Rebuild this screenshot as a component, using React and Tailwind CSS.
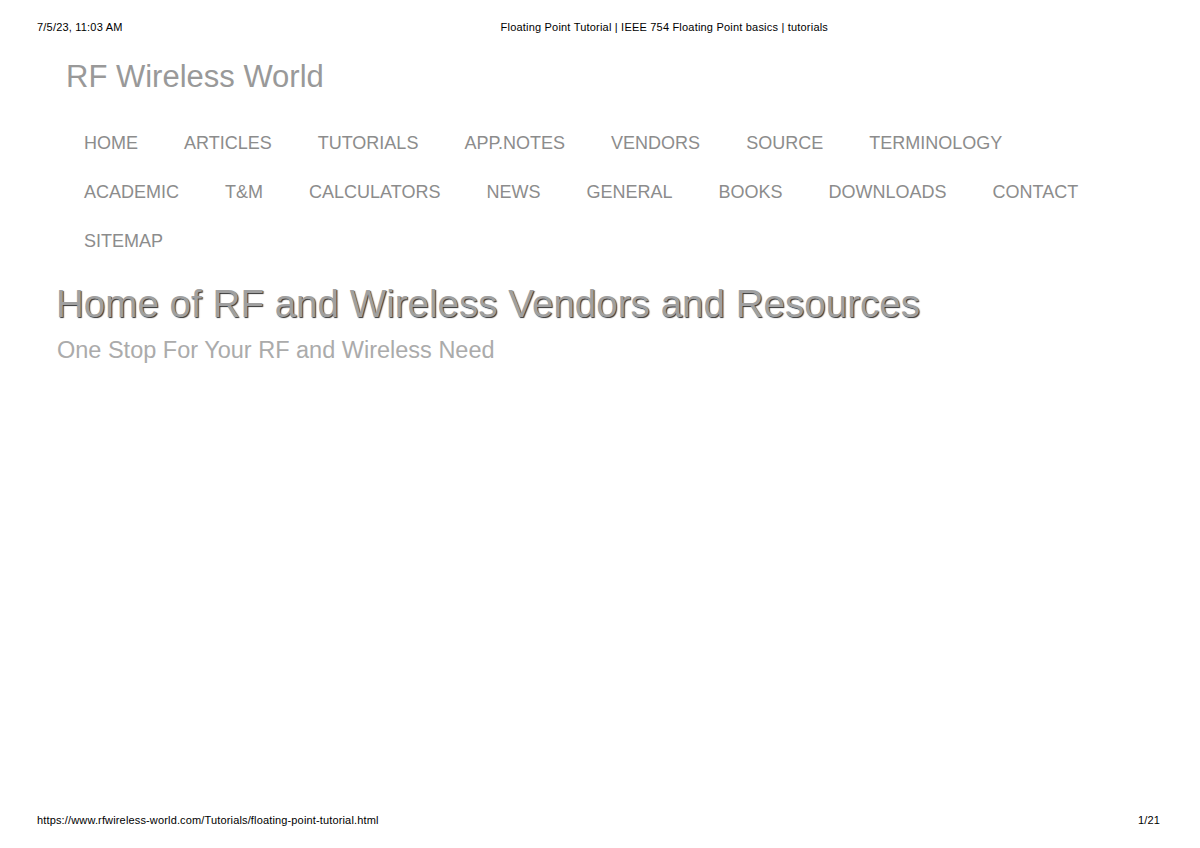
export default function App() {
  const row = [
    "HOME","ARTICLES","TUTORIALS","APP.NOTES","VENDORS","SOURCE","TERMINOLOGY",
    "ACADEMIC","T&M","CALCULATORS","NEWS","GENERAL","BOOKS","DOWNLOADS","CONTACT","SITEMAP",
  ];
  return (
    <div className="flex min-h-[848px] flex-col bg-white font-['Liberation_Sans',Arial,sans-serif]">
      <div className="flex pt-[20px] pl-[37px] text-[11px] leading-[14px] tracking-[0.2px] text-black">
        <span>7/5/23, 11:03 AM</span>
        <span className="ml-[378px]">Floating Point Tutorial | IEEE 754 Floating Point basics | tutorials</span>
      </div>
      <div className="mt-[25px] pl-[66px] text-[31px] leading-[36px] text-[#999999]">RF Wireless World</div>
      <ul className="mt-[36px] flex w-[1140px] flex-wrap gap-x-[46px] gap-y-[25px] pl-[84px] text-[18px] leading-[24px] text-[#8c8c8c]">
        {row.map((r) => (
          <li key={r}>{r}</li>
        ))}
      </ul>
      <h1 className="mt-[28px] pl-[56px] text-[38.6px] leading-[46px] text-[#a0a0a0] [text-shadow:1px_1px_1px_#333333]">
        Home of RF and Wireless Vendors and Resources
      </h1>
      <div className="mt-[9px] pl-[57px] text-[23.5px] leading-[28px] text-[#ababab]">One Stop For Your RF and Wireless Need</div>
      <div className="mt-auto flex justify-between pb-[21px] pl-[37px] pr-[40px] text-[11px] leading-[14px] tracking-[0.15px] text-black">
        <span>https://www.rfwireless-world.com/Tutorials/floating-point-tutorial.html</span>
        <span>1/21</span>
      </div>
    </div>
  );
}
